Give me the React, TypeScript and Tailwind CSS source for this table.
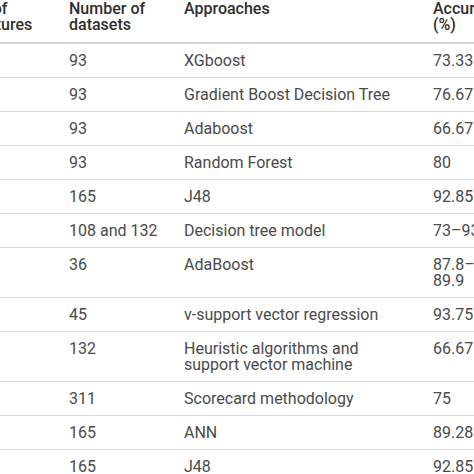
import React from "react";

type Row = { n: React.ReactNode; a: React.ReactNode; acc: React.ReactNode };

const rows: Row[] = [
  { n: "93", a: "XGboost", acc: "73.33" },
  { n: "93", a: "Gradient Boost Decision Tree", acc: "76.67" },
  { n: "93", a: "Adaboost", acc: "66.67" },
  { n: "93", a: "Random Forest", acc: "80" },
  { n: "165", a: "J48", acc: "92.85" },
  { n: "108 and 132", a: "Decision tree model", acc: "73–93" },
  { n: "36", a: "AdaBoost", acc: <>87.8–<br />89.9</> },
  { n: "45", a: "v-support vector regression", acc: "93.75" },
  { n: "132", a: "Heuristic algorithms and support vector machine", acc: "66.67" },
  { n: "311", a: "Scorecard methodology", acc: "75" },
  { n: "165", a: "ANN", acc: "89.28" },
  { n: "165", a: "J48", acc: "92.85" },
];

export default function App() {
  return (
    <div
      className="w-[474px] h-[474px] overflow-hidden bg-white"
      style={{ fontFamily: "Roboto, 'Liberation Sans', sans-serif" }}
    >
      <div className="-ml-[39px] w-[560px] text-[16px] leading-[16px]">
        <div className="grid grid-cols-[96px_115px_249px_1fr] border-b-2 border-[#d6d6d6] pt-[1px] pb-[9px] font-medium text-[#2e2e2e]">
          <div className="pl-[12px]">N. of<br />features</div>
          <div className="pl-[12px]">Number of<br />datasets</div>
          <div className="pl-[12px]">Approaches</div>
          <div className="pl-[12px]">Accuracy<br />(%)</div>
        </div>
        {rows.map((r, i) => (
          <div
            key={i}
            className="grid grid-cols-[96px_115px_249px_1fr] border-b border-[#dcdcdc] pt-[9px] pb-[8px] text-[#4a4a4a]"
          >
            <div className="pl-[12px]"></div>
            <div className="pl-[12px]">{r.n}</div>
            <div className="pl-[12px] pr-[17px]">{r.a}</div>
            <div className="pl-[12px] w-[70px]">{r.acc}</div>
          </div>
        ))}
      </div>
    </div>
  );
}
